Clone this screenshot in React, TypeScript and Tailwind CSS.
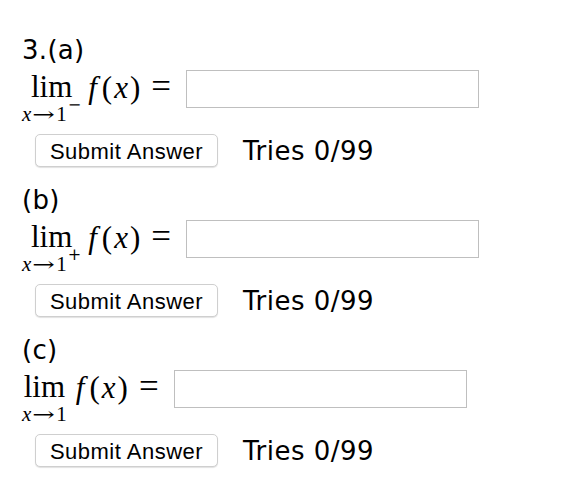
const parts = [
  { label: '3.(a)', sign: '−' },
  { label: '(b)', sign: '+' },
  { label: '(c)', sign: '' },
];

function LimitRow({ sign }: { sign: string }) {
  return (
    <div className="flex h-[60px] items-start">
      <div className="mt-[7px] inline-flex flex-col items-center font-['Liberation_Serif',serif] text-black">
        <span className="text-[31px] leading-[30px]">lim</span>
        <span className="mt-[2px] h-[21px] whitespace-nowrap text-[21px] leading-[21px]">
          <i>x</i>
          <span className="mx-[1px] inline-block w-[23px] scale-x-[1.35] text-center font-['DejaVu_Serif',serif] text-[20px] leading-none">→</span>1
          {sign && (
            <span className="relative -top-[11px] ml-[1px] font-['DejaVu_Serif',serif] text-[16px] leading-none">{sign}</span>
          )}
        </span>
      </div>
      <div className={`mt-[7px] whitespace-nowrap font-['Liberation_Serif',serif] text-[31px] leading-[30px] text-black ${sign ? 'ml-[7px]' : 'ml-[9px]'}`}>
        <i className="mr-[5px]">f</i>(<i className="mx-[2px]">x</i>)
        <span className="ml-[11px] text-[35px]">=</span>
      </div>
      <input
        type="text"
        className={`mt-[5px] h-[38px] w-[293px] border border-[#bfbfbf] bg-white outline-none ${sign ? 'ml-[15px]' : 'ml-[15px]'}`}
      />
    </div>
  );
}

export default function App() {
  return (
    <div className="min-h-[486px] w-[572px] bg-white pl-[22px] pt-[35px] font-['DejaVu_Sans',Verdana,sans-serif] text-black">
      {parts.map((p, i) => (
        <section key={i} className={i > 0 ? 'mt-[18px]' : ''}>
          <div className="h-[30px] text-[26px] leading-[30px] tracking-[0.3px]">{p.label}</div>
          <LimitRow sign={p.sign} />
          <div className="mt-[9px] flex h-[33px] items-center">
            <button className="ml-[13px] h-[33px] w-[183px] rounded-[5px] border border-[#cfcfcf] bg-white font-['Liberation_Sans',Arial,sans-serif] text-[22px] tracking-[0.5px] text-black shadow-[0_1px_1px_rgba(0,0,0,0.12)]">
              Submit Answer
            </button>
            <span className="ml-[25px] text-[26px] leading-[30px] tracking-[0.5px]">Tries 0/99</span>
          </div>
        </section>
      ))}
    </div>
  );
}
